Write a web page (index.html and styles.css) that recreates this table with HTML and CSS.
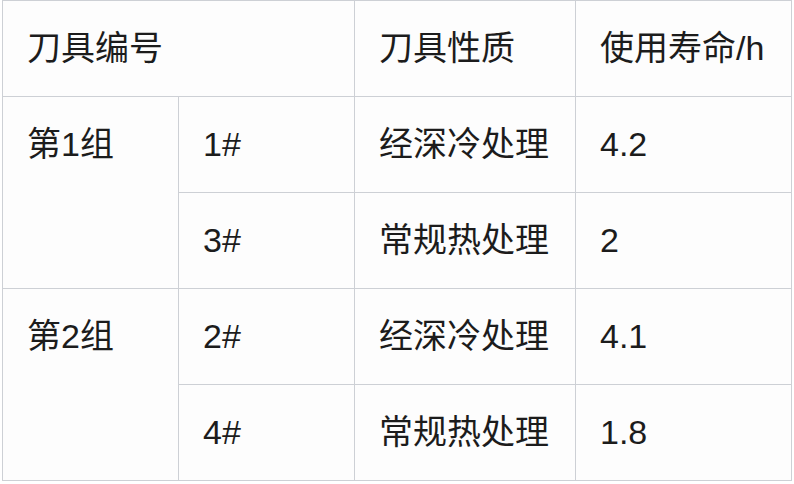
FILE: index.html
```html
<!DOCTYPE html>
<html lang="zh">
<head>
<meta charset="utf-8">
<link rel="stylesheet" href="styles.css">
</head>
<body>
<table class="data">
  <colgroup>
    <col class="c1"><col class="c2"><col class="c3"><col class="c4">
  </colgroup>
  <tr>
    <td colspan="2">刀具编号</td>
    <td>刀具性质</td>
    <td>使用寿命/h</td>
  </tr>
  <tr>
    <td rowspan="2">第1组</td>
    <td>1#</td>
    <td>经深冷处理</td>
    <td>4.2</td>
  </tr>
  <tr>
    <td>3#</td>
    <td>常规热处理</td>
    <td>2</td>
  </tr>
  <tr>
    <td rowspan="2">第2组</td>
    <td>2#</td>
    <td>经深冷处理</td>
    <td>4.1</td>
  </tr>
  <tr>
    <td>4#</td>
    <td>常规热处理</td>
    <td>1.8</td>
  </tr>
</table>
</body>
</html>
```
FILE: styles.css
```css
html, body {
  margin: 0;
  padding: 0;
  background: #ffffff;
}
.data {
  margin: 0 0 0 2px;
  border-collapse: collapse;
  table-layout: fixed;
  width: 789px;
  font-family: "Liberation Sans", "Noto Sans CJK SC", sans-serif;
  font-size: 34px;
  color: #1c1c1c;
  background: #fdfdfd;
}
.c1 { width: 176px; }
.c2 { width: 176px; }
.c3 { width: 221px; }
.c4 { width: 216px; }
.data td {
  border: 1px solid #cdd0d5;
  padding: 24px 24px;
  height: 47px;
  line-height: 47px;
  vertical-align: top;
  text-align: left;
  white-space: nowrap;
  box-sizing: content-box;
}
```
